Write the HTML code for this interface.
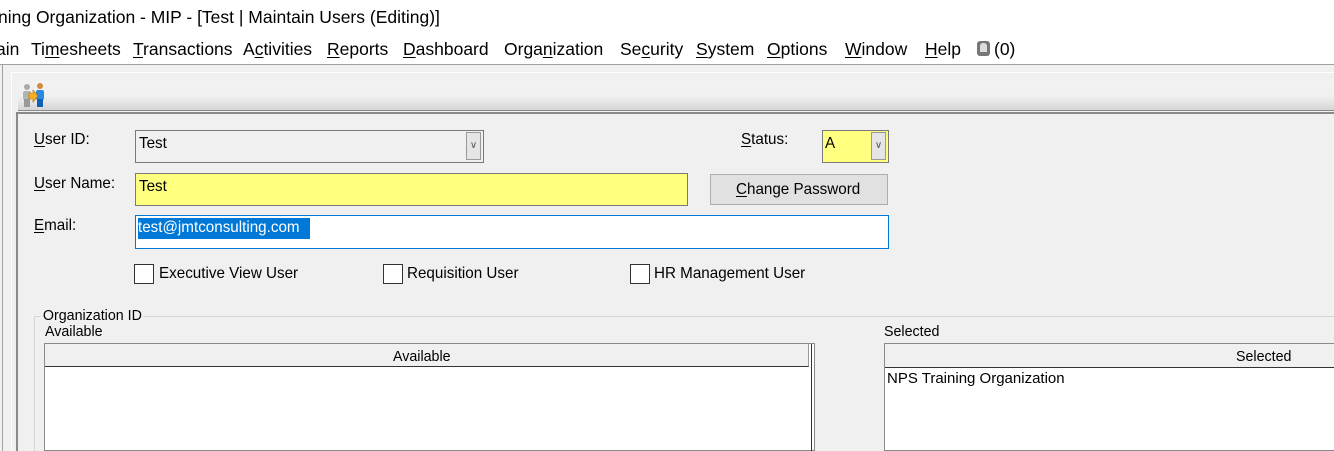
<!DOCTYPE html>
<html><head><meta charset="utf-8"><style>
*{margin:0;padding:0;box-sizing:border-box}
body{width:1334px;height:451px;overflow:hidden;background:#fff;position:relative;font-family:"Liberation Sans",sans-serif;color:#000}
.a{position:absolute;white-space:nowrap}
.t{font-size:17.5px}
.n{font-size:16px;transform:scaleX(.95);transform-origin:left top}
u{text-decoration:underline;text-underline-offset:2px}
.m{position:absolute;top:39px;font-size:17.5px;white-space:nowrap}
</style></head><body>
<div class="a t" style="left:-2px;top:7px">ning Organization - MIP - [Test | Maintain Users (Editing)]</div>
<div class="m" style="left:-4px">ain</div>
<div class="m" style="left:31px">Ti<u>m</u>esheets</div>
<div class="m" style="left:133px"><u>T</u>ransactions</div>
<div class="m" style="left:243px">A<u>c</u>tivities</div>
<div class="m" style="left:327px"><u>R</u>eports</div>
<div class="m" style="left:403px"><u>D</u>ashboard</div>
<div class="m" style="left:504px">Orga<u>n</u>ization</div>
<div class="m" style="left:620px">Se<u>c</u>urity</div>
<div class="m" style="left:696px"><u>S</u>ystem</div>
<div class="m" style="left:767px"><u>O</u>ptions</div>
<div class="m" style="left:845px"><u>W</u>indow</div>
<div class="m" style="left:925px"><u>H</u>elp</div>
<div class="a" style="left:977px;top:41px;width:13px;height:15px;background:#777;border-radius:3px"><div style="position:absolute;left:3px;top:2px;width:7px;height:9px;background:#ddd;border-radius:3px 3px 0 0"></div></div>
<div class="m" style="left:994px">(0)</div>
<!-- window -->
<div class="a" style="left:0;top:64px;width:1334px;height:387px;background:#f0f0f0;border-top:1px solid #a0a0a0"></div>
<div class="a" style="left:2px;top:65px;width:1px;height:386px;background:#a0a0a0"></div>
<div class="a" style="left:11px;top:72px;width:1323px;height:379px;border-left:1px solid #fff;border-top:1px solid #fff"></div>
<div class="a" style="left:18px;top:79px;width:1316px;height:32px;background:linear-gradient(#f2f2f2 0%,#f0f0f0 55%,#d8d8d8 95%);border-bottom:1px solid #888"></div>
<svg class="a" style="left:21px;top:82px" width="26" height="27" viewBox="0 0 26 27">
<circle cx="6" cy="5" r="3" fill="#aaa"/><rect x="2" y="9" width="8" height="9" rx="2" fill="#b4b4b4"/><rect x="3" y="17" width="6" height="8" fill="#999"/>
<circle cx="19" cy="4" r="3" fill="#d08a40"/><rect x="15" y="8" width="8" height="10" rx="2" fill="#2a8ae0"/><rect x="16" y="17" width="6" height="8" fill="#1060b8"/>
<path d="M8 11h4v-3l5 6-5 6v-3h-4z" fill="#f5b020" stroke="#c07000" stroke-width=".6"/></svg>
<div class="a" style="left:16px;top:112px;width:1318px;height:339px;border-left:2px solid #8a8a8a;border-top:2px solid #8a8a8a"></div>
<!-- form -->
<div class="a n" style="left:34px;top:131px"><u>U</u>ser ID:</div>
<div class="a" style="left:135px;top:130px;width:349px;height:33px;border:1px solid #7a7a7a;background:#f0f0f0"></div>
<div class="a n" style="left:139px;top:135px">Test</div>
<div class="a" style="left:466px;top:132px;width:15px;height:28px;border:1px solid #999;background:#e5e5e5;color:#555;font-size:10px;text-align:center;line-height:26px">&#8744;</div>
<div class="a n" style="left:34px;top:175px"><u>U</u>ser Name:</div>
<div class="a" style="left:135px;top:173px;width:553px;height:33px;border:1px solid #7a7a7a;background:#ffff80"></div>
<div class="a n" style="left:139px;top:178px">Test</div>
<div class="a n" style="left:34px;top:217px"><u>E</u>mail:</div>
<div class="a" style="left:135px;top:215px;width:754px;height:34px;border:1px solid #0078d7;background:#fff"></div>
<div class="a" style="left:138px;top:218px;width:172px;height:21px;background:#0078d7"></div>
<div class="a n" style="left:138px;top:219px;color:#fff">test@jmtconsulting.com</div>
<div class="a n" style="left:741px;top:131px"><u>S</u>tatus:</div>
<div class="a" style="left:822px;top:130px;width:67px;height:33px;border:1px solid #7a7a7a;background:#ffff80"></div>
<div class="a n" style="left:825px;top:135px">A</div>
<div class="a" style="left:871px;top:132px;width:15px;height:28px;border:1px solid #999;background:#e5e5e5;color:#555;font-size:10px;text-align:center;line-height:26px">&#8744;</div>
<div class="a" style="left:710px;top:174px;width:178px;height:31px;border:1px solid #adadad;background:#e1e1e1"></div>
<div class="a n" style="left:736px;top:181px"><u>C</u>hange Password</div>
<div class="a" style="left:134px;top:264px;width:20px;height:20px;border:1px solid #333;background:#fff"></div>
<div class="a n" style="left:159px;top:265px">Executive View User</div>
<div class="a" style="left:383px;top:264px;width:20px;height:20px;border:1px solid #333;background:#fff"></div>
<div class="a n" style="left:407px;top:265px">Requisition User</div>
<div class="a" style="left:630px;top:264px;width:20px;height:20px;border:1px solid #333;background:#fff"></div>
<div class="a n" style="left:654px;top:265px">HR Management User</div>
<!-- group -->
<div class="a" style="left:34px;top:316px;width:1300px;height:135px;border-left:1px solid #d5d5d5;border-top:1px solid #d5d5d5"></div>
<div class="a n" style="left:41px;top:307px;background:#f0f0f0;padding:0 2px;font-size:15px">Organization ID</div>
<div class="a n" style="left:45px;top:323px;font-size:15px">Available</div>
<div class="a" style="left:44px;top:343px;width:771px;height:108px;border:1px solid #8a8a8a;background:#fff"></div>
<div class="a" style="left:45px;top:344px;width:764px;height:23px;background:#f0f0f0;border-bottom:1px solid #333;border-right:1px solid #999"></div>
<div class="a" style="left:811px;top:344px;width:1px;height:107px;background:#333"></div>
<div class="a n" style="left:393px;top:348px;font-size:15px">Available</div>
<div class="a n" style="left:884px;top:323px;font-size:15px">Selected</div>
<div class="a" style="left:884px;top:343px;width:460px;height:108px;border:1px solid #8a8a8a;background:#fff"></div>
<div class="a" style="left:885px;top:344px;width:449px;height:24px;background:#f0f0f0;border-bottom:1px solid #333"></div>
<div class="a n" style="left:1236px;top:348px;font-size:15px">Selected</div>
<div class="a n" style="left:887px;top:370px;font-size:15px;transform:none">NPS Training Organization</div>
</body></html>
